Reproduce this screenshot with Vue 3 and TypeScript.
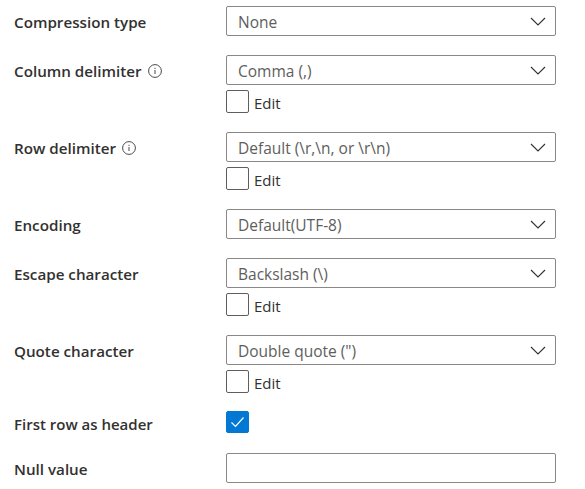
<script setup lang="ts">
interface Row {
  label: string;
  value?: string;
  info?: boolean;
  edit?: boolean;
  kind: 'select' | 'check' | 'input';
}
const rows: Row[] = [
  { label: 'Compression type', value: 'None', kind: 'select' },
  { label: 'Column delimiter', value: 'Comma (,)', info: true, edit: true, kind: 'select' },
  { label: 'Row delimiter', value: 'Default (\\r,\\n, or \\r\\n)', info: true, edit: true, kind: 'select' },
  { label: 'Encoding', value: 'Default(UTF-8)', kind: 'select' },
  { label: 'Escape character', value: 'Backslash (\\)', edit: true, kind: 'select' },
  { label: 'Quote character', value: 'Double quote (")', edit: true, kind: 'select' },
  { label: 'First row as header', kind: 'check' },
  { label: 'Null value', kind: 'input' },
];
</script>

<template>
  <div class="form">
    <div v-for="row in rows" :key="row.label" class="row" :class="{ 'check-row': row.kind === 'check' }">
      <div class="label">
        <span class="label-text">{{ row.label }}</span>
        <svg v-if="row.info" class="info" width="16" height="16" viewBox="0 0 16 16" fill="none">
          <circle cx="8" cy="8" r="6.4" stroke="#4a4a4a" stroke-width="1" />
          <rect x="7.5" y="7" width="1" height="4" fill="#4a4a4a" />
          <rect x="7.5" y="4.8" width="1" height="1.2" fill="#4a4a4a" />
        </svg>
      </div>
      <div class="field">
        <div v-if="row.kind === 'select'" class="box">
          <span class="value">{{ row.value }}</span>
          <svg class="chevron" width="16" height="9" viewBox="0 0 16 9" fill="none">
            <path d="M1 1l7 7 7-7" stroke="#323130" stroke-width="1.1" />
          </svg>
        </div>
        <div v-if="row.kind === 'input'" class="box"></div>
        <label v-if="row.edit" class="edit">
          <span class="checkbox"></span>
          <span class="edit-text">Edit</span>
        </label>
        <span v-if="row.kind === 'check'" class="checkbox checked">
          <svg width="15" height="12" viewBox="0 0 15 12" fill="none">
            <path d="M1.5 6.5l4 4 8-9" stroke="#fff" stroke-width="1.2" />
          </svg>
        </span>
      </div>
    </div>
  </div>
</template>

<style>
html, body { margin: 0; background: #fff; }
</style>

<style scoped>
.form {
  width: 585px;
  height: 489px;
  box-sizing: border-box;
  padding: 6px 29px 0 14px;
  display: flex;
  flex-direction: column;
  gap: 19px;
  font-family: "Open Sans", "Noto Sans", sans-serif;
  color: #323130;
  overflow: hidden;
}
.row {
  display: grid;
  grid-template-columns: 212px 330px;
}
.check-row {
  margin: -1px 0 1px;
}
.label {
  display: flex;
  align-items: center;
  gap: 6px;
  height: 30px;
  font-size: 15.2px;
  font-weight: 600;
}
.label-text { padding-top: 2px; }
.check-row .label {
  font-size: 15px;
  height: 24px;
  margin-bottom: -2px;
}
.info { flex: none; margin-top: 2px; margin-left: -1px; }
.field {
  display: flex;
  flex-direction: column;
  gap: 5px;
  align-items: flex-start;
}
.box {
  width: 330px;
  height: 30px;
  box-sizing: border-box;
  border: 1px solid #8a8886;
  border-radius: 2px;
  padding: 0 9px 0 11px;
  display: flex;
  align-items: center;
  justify-content: space-between;
}
.value {
  font-size: 15.5px;
  color: #605e5c;
  padding-top: 2px;
}
.chevron { margin-top: 1px; }
.edit {
  display: flex;
  align-items: center;
  gap: 5px;
}
.edit-text {
  font-size: 15px;
  color: #323130;
  padding-top: 2px;
}
.checkbox {
  width: 23px;
  height: 23px;
  box-sizing: border-box;
  border: 1px solid #605e5c;
  border-radius: 2px;
  display: flex;
  align-items: center;
  justify-content: center;
}
.checkbox.checked {
  height: 22px;
  background: #0078d4;
  border-color: #0078d4;
}
</style>
